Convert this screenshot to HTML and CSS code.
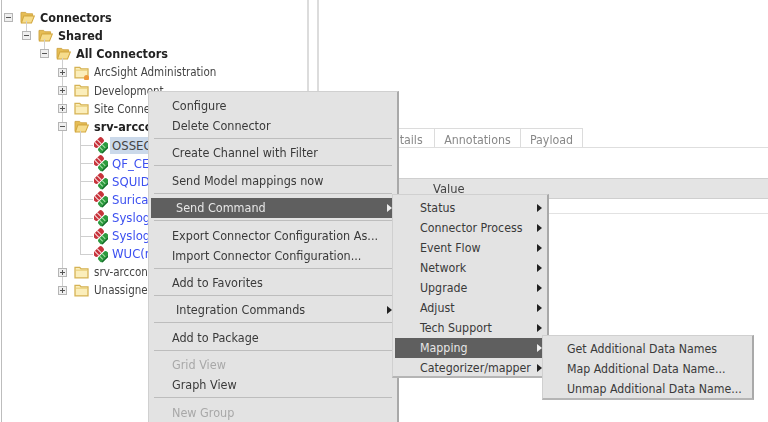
FILE: index.html
```html
<!DOCTYPE html>
<html lang="en">
<head>
<meta charset="utf-8">
<title>Connectors</title>
<link rel="stylesheet" href="styles.css">
</head>
<body>
<svg class="defs" width="0" height="0" aria-hidden="true">
  <symbol id="folder-open" viewBox="0 0 16 14">
    <path d="M1 1.500h5l1.500 1.500h6v2.500H5L2.800 12.500H1z" fill="#e6bd55" stroke="#cfa544" stroke-width="1"/>
    <path d="M4 5.500h11.300l-3 7.300H1.500z" fill="#f6dc8c" stroke="#d3a83f" stroke-width="1.100"/>
  </symbol>
  <symbol id="folder" viewBox="0 0 16 14">
    <path d="M1 1.500h5l1.500 1.500h7.500v9.800H1z" fill="#fbeebb" stroke="#d6b355" stroke-width="1.400"/>
    <path d="M2 4.500h12" stroke="#e6c86e" stroke-width="1"/>
  </symbol>
  <symbol id="connector" viewBox="0 0 14 18">
    <g transform="rotate(-45 7 9)">
      <rect x="1" y="2.500" width="12" height="6" rx="2.500" fill="#c7333b"/>
      <path d="M4.500 2.500v6M8 2.500v6" stroke="#f6dddd" stroke-width="1.100"/>
      <rect x="1" y="9.500" width="12" height="6.500" rx="2.500" fill="#2c9a3e"/>
      <path d="M4.500 9.500v4.500M8 9.500v4.500" stroke="#a9dfa9" stroke-width="1"/>
      <path d="M2 15.500h10" stroke="#14642a" stroke-width="1"/>
    </g>
  </symbol>
</svg>

<main class="desktop">
  <section class="tree-pane">
    <ul class="tree">
      <li>
        <div class="row bold"><span class="exp minus"></span><svg class="ico"><use href="#folder-open"/></svg><span>Connectors</span></div>
        <ul class="short">
          <li>
            <div class="row bold"><span class="exp minus"></span><svg class="ico"><use href="#folder-open"/></svg><span>Shared</span></div>
            <ul class="short">
              <li>
                <div class="row bold"><span class="exp minus"></span><svg class="ico"><use href="#folder-open"/></svg><span>All Connectors</span></div>
                <ul class="groups">
                  <li><div class="row"><span class="exp plus"></span><span class="ico-wrap"><svg class="ico"><use href="#folder"/></svg><i class="warn"></i></span><span>ArcSight Administration</span></div></li>
                  <li><div class="row"><span class="exp plus"></span><svg class="ico"><use href="#folder"/></svg><span>Development</span></div></li>
                  <li><div class="row"><span class="exp plus"></span><svg class="ico"><use href="#folder"/></svg><span>Site Connectors</span></div></li>
                  <li>
                    <div class="row bold"><span class="exp minus"></span><svg class="ico"><use href="#folder-open"/></svg><span>srv-arccon01</span></div>
                    <ul class="leaves">
                      <li><div class="row leaf"><svg class="conn"><use href="#connector"/></svg><span class="sel">OSSEC</span></div></li>
                      <li><div class="row leaf link"><svg class="conn"><use href="#connector"/></svg><span>QF_CEF</span></div></li>
                      <li><div class="row leaf link"><svg class="conn"><use href="#connector"/></svg><span>SQUID</span></div></li>
                      <li><div class="row leaf link"><svg class="conn"><use href="#connector"/></svg><span>Suricata</span></div></li>
                      <li><div class="row leaf link"><svg class="conn"><use href="#connector"/></svg><span>Syslog</span></div></li>
                      <li><div class="row leaf link"><svg class="conn"><use href="#connector"/></svg><span>Syslog</span></div></li>
                      <li><div class="row leaf link"><svg class="conn"><use href="#connector"/></svg><span>WUC(r)</span></div></li>
                    </ul>
                  </li>
                  <li><div class="row"><span class="exp plus"></span><svg class="ico"><use href="#folder"/></svg><span>srv-arccon02</span></div></li>
                  <li><div class="row"><span class="exp plus"></span><svg class="ico"><use href="#folder"/></svg><span>Unassigned</span></div></li>
                </ul>
              </li>
            </ul>
          </li>
        </ul>
      </li>
    </ul>
  </section>

  <section class="detail-pane">
    <div class="top-space"></div>
    <div class="tabs">
      <span class="tab tab-details">Details</span>
      <span class="tab tab-annotations">Annotations</span>
      <span class="tab tab-payload">Payload</span>
    </div>
    <div class="tab-body">
      <div class="table-head"><span class="head-value">Value</span></div>
      <div class="table-row"></div>
    </div>
  </section>

  <nav class="menu menu-main">
    <div class="item">Configure</div>
    <div class="item">Delete Connector</div>
    <hr class="sep">
    <div class="item">Create Channel with Filter</div>
    <hr class="sep">
    <div class="item">Send Model mappings now</div>
    <hr class="sep">
    <div class="item sub active">Send Command</div>
    <hr class="sep">
    <div class="item">Export Connector Configuration As...</div>
    <div class="item">Import Connector Configuration...</div>
    <hr class="sep">
    <div class="item">Add to Favorites</div>
    <hr class="sep">
    <div class="item sub">Integration Commands</div>
    <hr class="sep">
    <div class="item">Add to Package</div>
    <hr class="sep">
    <div class="item off">Grid View</div>
    <div class="item">Graph View</div>
    <hr class="sep">
    <div class="item off">New Group</div>
  </nav>

  <nav class="menu menu-second">
    <div class="item sub">Status</div>
    <div class="item sub">Connector Process</div>
    <div class="item sub">Event Flow</div>
    <div class="item sub">Network</div>
    <div class="item sub">Upgrade</div>
    <div class="item sub">Adjust</div>
    <div class="item sub">Tech Support</div>
    <div class="item sub active">Mapping</div>
    <div class="item sub">Categorizer/mapper</div>
  </nav>

  <nav class="menu menu-third">
    <div class="item">Get Additional Data Names</div>
    <div class="item">Map Additional Data Name...</div>
    <div class="item">Unmap Additional Data Name...</div>
  </nav>
</main>
</body>
</html>
```

FILE: styles.css
```css
* { box-sizing: border-box; }
html, body { margin: 0; padding: 0; height: 100%; background: #fff; overflow: hidden; }
.defs { position: absolute; }
.desktop {
  position: relative;
  display: flex;
  width: 768px;
  height: 422px;
  overflow: hidden;
  font-family: "DejaVu Sans Condensed", "DejaVu Sans", sans-serif;
  font-stretch: condensed;
  font-size: 11.500px;
  color: #333;
  filter: blur(.55px);
}

/* tree */
.tree-pane {
  width: 308px;
  flex: none;
  height: 422px;
  border-left: 1px solid #bdbdbd;
  border-right: 2px solid #dcdcdc;
  padding: 8px 0 0 2px;
  margin-left: 1px;
}
.tree, .tree ul { list-style: none; margin: 0; padding: 0; }
.tree ul { margin-left: 18px; position: relative; }
.tree ul.groups { margin-top: 1px; }
.tree ul::before {
  content: "";
  position: absolute;
  left: 4px;
  top: -5px;
  bottom: 9px;
  width: 1px;
  background: #cfcfcf;
}
.tree ul.short::before { bottom: auto; height: 10px; }
.row {
  position: relative;
  display: flex;
  align-items: center;
  height: 18.150px;
  white-space: nowrap;
  color: #444;
}
.row.bold { font-weight: 700; font-size: 12.500px; color: #222; }
.exp {
  position: relative;
  z-index: 1;
  flex: none;
  width: 9px;
  height: 9px;
  margin-right: 7px;
  border: 1px solid #b5b5b5;
  background: #efefef;
}
.exp::before {
  content: "";
  position: absolute;
  left: 1px;
  right: 1px;
  top: 3px;
  height: 1px;
  background: #555;
}
.exp.plus::after {
  content: "";
  position: absolute;
  top: 1px;
  bottom: 1px;
  left: 3px;
  width: 1px;
  background: #555;
}
.ico { flex: none; width: 15px; height: 13px; margin-right: 5px; display: block; }
.ico-wrap { position: relative; flex: none; display: block; }
.warn {
  position: absolute;
  right: 5px;
  bottom: -1px;
  width: 5px;
  height: 5px;
  background: #ef9a3c;
  border-radius: 50% 50% 1px 1px;
}
.leaf { padding-left: 18px; font-size: 13px; }
.leaf::before {
  content: "";
  position: absolute;
  left: 4px;
  width: 13px;
  top: 50%;
  height: 1px;
  background: #cfcfcf;
}
.conn { flex: none; width: 14px; height: 18px; margin-right: 2px; display: block; }
.leaf span { padding: 1px 2px; }
.link { color: #3c50f0; }
.sel { background: #cbd9ea; }

/* detail */
.detail-pane {
  margin-left: 8px;
  flex: 1;
  height: 422px;
  border-left: 2px solid #dcdcdc;
  display: flex;
  flex-direction: column;
}
.top-space { height: 128px; flex: none; }
.tabs { display: flex; height: 20px; flex: none; border-bottom: 1px solid #dedede; padding-left: 54px; color: #888; font-size: 12.300px; }
.tab {
  display: flex;
  align-items: center;
  justify-content: center;
  padding-top: 4px;
  border: 1px solid #dcdcdc;
  border-bottom: 0;
  border-left-width: 0;
}
.tab-details { width: 62px; }
.tab-annotations { width: 86px; }
.tab-payload { width: 62px; }
.tab-body { flex: 1; padding-top: 30px; }
.table-head {
  height: 21px;
  background: #e4e4e4;
  border-top: 1px solid #cfcfcf;
  border-bottom: 1px solid #cfcfcf;
  padding-left: 114px;
  display: flex;
  align-items: center;
  font-size: 12.800px;
  color: #444;
}
.table-row { height: 15px; border-bottom: 1px solid #e2e2e2; }

/* menus */
.menu {
  position: absolute;
  background: #e3e3e3;
  border: 1px solid #d0d0d0;
  border-right: 2px solid #a9a9a9;
  border-bottom: 2px solid #b5b5b5;
  font-size: 12.500px;
  color: #3a3a3a;
}
.menu-main { left: 148px; top: 91px; width: 251px; padding: 4px 3px 0 2px; }
.menu-second { left: 392px; top: 194px; width: 157px; padding: 3px 3px 0 2px; height: 184px; z-index: 2; font-size: 12.300px; }
.menu-third { left: 542px; top: 335px; width: 212px; padding: 3px 3px 0 2px; height: 65px; z-index: 3; font-size: 12.250px; }
.item {
  position: relative;
  height: 20px;
  line-height: 20px;
  padding-left: 21px;
  white-space: nowrap;
}
.menu-second .item { padding-left: 25px; }
.menu-third .item { padding-left: 22px; }
.item.sub { padding-left: 25px; }
.item.sub::after {
  content: "";
  position: absolute;
  right: 2px;
  top: 5.500px;
  border-left: 5px solid #222;
  border-top: 4px solid transparent;
  border-bottom: 4px solid transparent;
}
.item.active { background: #5f5f5f; color: #e6e6e6; }
.item.active::after { border-left-color: #eee; }
.item.off { color: #a8a8a8; }
.sep {
  height: 7.400px;
  margin: 0 2px 0 3px;
  padding: 0;
  border: 0;
  background: linear-gradient(#bdbdbd, #bdbdbd) no-repeat 0 2px / 100% 1px;
}
```
